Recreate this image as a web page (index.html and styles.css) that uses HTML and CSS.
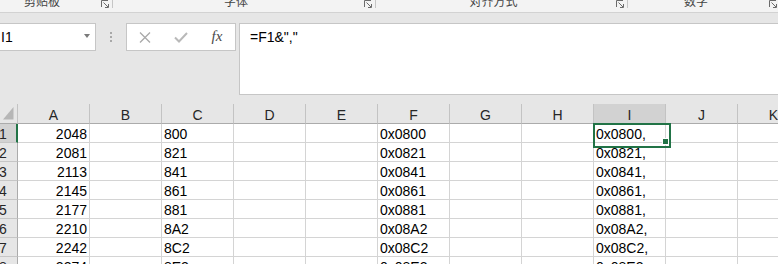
FILE: index.html
```html
<!DOCTYPE html>
<html lang="zh-CN">
<head>
    <meta charset="UTF-8">
    <title>Sheet1 - Excel</title>
    <link rel="stylesheet" href="styles.css">
</head>
<body>
    <div id="ribbon">
        <div class="group g1">
            <span class="group-label">剪贴板</span>
            <svg class="launcher" width="8" height="8" viewBox="0 0 8 8"><path d="M0.5 7V0.5H7M2.5 2.5L7 7M4 7.5H7.5V4" fill="none" stroke="#6a6a6a" stroke-width="1"/></svg>
        </div>
        <div class="group g2">
            <span class="group-label">字体</span>
            <svg class="launcher" width="8" height="8" viewBox="0 0 8 8"><path d="M0.5 7V0.5H7M2.5 2.5L7 7M4 7.5H7.5V4" fill="none" stroke="#6a6a6a" stroke-width="1"/></svg>
        </div>
        <div class="group g3">
            <span class="group-label">对齐方式</span>
            <svg class="launcher" width="8" height="8" viewBox="0 0 8 8"><path d="M0.5 7V0.5H7M2.5 2.5L7 7M4 7.5H7.5V4" fill="none" stroke="#6a6a6a" stroke-width="1"/></svg>
        </div>
        <div class="group g4">
            <span class="group-label">数字</span>
            <svg class="launcher" width="8" height="8" viewBox="0 0 8 8"><path d="M0.5 7V0.5H7M2.5 2.5L7 7M4 7.5H7.5V4" fill="none" stroke="#6a6a6a" stroke-width="1"/></svg>
        </div>
    </div>

    <div id="formula-row">
        <div class="name-box">
            <span>I1</span>
            <span class="drop"></span>
        </div>
        <div class="dots"><i></i><i></i><i></i></div>
        <div class="fx-buttons">
            <span class="fx-btn">
                <svg width="12" height="11" viewBox="0 0 12 11"><path d="M1 0.5L11 10.5M11 0.5L1 10.5" stroke="#a9a9a9" stroke-width="1.3"/></svg>
            </span>
            <span class="fx-btn">
                <svg width="14" height="11" viewBox="0 0 14 11"><path d="M1 5.5L5 9.5L13 1" fill="none" stroke="#b9b9b9" stroke-width="2"/></svg>
            </span>
            <span class="fx-btn fx">fx</span>
        </div>
        <div class="formula">=F1&amp;","</div>
    </div>

    <div id="sheet">
        <div class="hd corner"><svg width="17" height="19" viewBox="0 0 17 19"><polygon points="13.5,3 13.5,15.5 3,15.5" fill="#b6b6b6"/></svg></div>
        <div class="hd">A</div><div class="hd">B</div><div class="hd">C</div><div class="hd">D</div>
        <div class="hd">E</div><div class="hd">F</div><div class="hd">G</div><div class="hd">H</div>
        <div class="hd on">I</div><div class="hd">J</div><div class="hd">K</div>

        <div class="rh on">1</div><div class="c num">2048</div><div class="c"></div><div class="c">800</div><div class="c"></div><div class="c"></div><div class="c">0x0800</div><div class="c"></div><div class="c"></div><div class="c active">0x0800,</div><div class="c"></div><div class="c"></div>
        <div class="rh">2</div><div class="c num">2081</div><div class="c"></div><div class="c">821</div><div class="c"></div><div class="c"></div><div class="c">0x0821</div><div class="c"></div><div class="c"></div><div class="c">0x0821,</div><div class="c"></div><div class="c"></div>
        <div class="rh">3</div><div class="c num">2113</div><div class="c"></div><div class="c">841</div><div class="c"></div><div class="c"></div><div class="c">0x0841</div><div class="c"></div><div class="c"></div><div class="c">0x0841,</div><div class="c"></div><div class="c"></div>
        <div class="rh">4</div><div class="c num">2145</div><div class="c"></div><div class="c">861</div><div class="c"></div><div class="c"></div><div class="c">0x0861</div><div class="c"></div><div class="c"></div><div class="c">0x0861,</div><div class="c"></div><div class="c"></div>
        <div class="rh">5</div><div class="c num">2177</div><div class="c"></div><div class="c">881</div><div class="c"></div><div class="c"></div><div class="c">0x0881</div><div class="c"></div><div class="c"></div><div class="c">0x0881,</div><div class="c"></div><div class="c"></div>
        <div class="rh">6</div><div class="c num">2210</div><div class="c"></div><div class="c">8A2</div><div class="c"></div><div class="c"></div><div class="c">0x08A2</div><div class="c"></div><div class="c"></div><div class="c">0x08A2,</div><div class="c"></div><div class="c"></div>
        <div class="rh">7</div><div class="c num">2242</div><div class="c"></div><div class="c">8C2</div><div class="c"></div><div class="c"></div><div class="c">0x08C2</div><div class="c"></div><div class="c"></div><div class="c">0x08C2,</div><div class="c"></div><div class="c"></div>
        <div class="rh">8</div><div class="c num">2274</div><div class="c"></div><div class="c">8E2</div><div class="c"></div><div class="c"></div><div class="c">0x08E2</div><div class="c"></div><div class="c"></div><div class="c">0x08E2,</div><div class="c"></div><div class="c"></div>
    </div>
</body>
</html>
```

FILE: styles.css
```css
* {
    margin: 0;
    padding: 0;
    box-sizing: border-box;
}

body {
    width: 778px;
    height: 264px;
    overflow: hidden;
    background-color: #e6e6e6;
    font-family: "Liberation Sans", Arial, sans-serif;
    font-size: 14px;
    color: #000;
}

/* ribbon group captions (cut off at the top) */
#ribbon {
    display: flex;
    height: 13px;
    background-color: #f3f3f3;
    border-bottom: 1px solid #d2d2d2;
    overflow: hidden;
    white-space: nowrap;
}

.group {
    display: flex;
    align-items: flex-start;
    flex-shrink: 0;
    height: 12px;
}

.group-label {
    flex: 1;
    text-align: center;
    font-family: "Noto Sans CJK SC", sans-serif;
    font-size: 12px;
    line-height: 12px;
    margin-top: -5px;
    margin-right: 5px;
    color: #444;
}

.launcher {
    flex-shrink: 0;
    margin-right: 3px;
}

.group::after {
    content: "";
    width: 1px;
    height: 8px;
    background-color: #c6c6c6;
}

.g1 { width: 125px; margin-left: -12px; }
.g2 { width: 263px; }
.g3 { width: 252px; }
.g4 { width: 153px; }

/* name box + formula bar */
#formula-row {
    display: flex;
    align-items: flex-start;
    height: 91px;
    padding-top: 10px;
}

.name-box {
    display: flex;
    align-items: center;
    justify-content: space-between;
    width: 102px;
    height: 28px;
    margin-left: -6px;
    padding-left: 6px;
    padding-right: 5px;
    line-height: 26px;
    background-color: #fff;
    border: 1px solid #c6c6c6;
}

.drop {
    width: 0;
    height: 0;
    margin-bottom: 2px;
    border-left: 3.5px solid transparent;
    border-right: 3.5px solid transparent;
    border-top: 4px solid #7a7a7a;
}

.dots {
    display: flex;
    flex-direction: column;
    gap: 2px;
    margin: 9px 14px 0 14px;
}

.dots i {
    width: 2px;
    height: 2px;
    background-color: #a8a8a8;
}

.fx-buttons {
    display: flex;
    width: 110px;
    height: 28px;
    background-color: #fff;
    border: 1px solid #c6c6c6;
}

.fx-btn {
    display: flex;
    align-items: center;
    justify-content: center;
    width: 36px;
    height: 26px;
}

.fx {
    font-family: "Liberation Serif", serif;
    font-style: italic;
    font-size: 15px;
    color: #4a4a4a;
    padding-bottom: 1px;
}

.formula {
    flex: 1;
    height: 72px;
    margin-left: 3px;
    padding: 3px 0 0 10px;
    line-height: 20px;
    background-color: #fff;
    border: 1px solid #c6c6c6;
    border-right: none;
}

/* grid */
#sheet {
    display: grid;
    grid-template-columns: 18px repeat(11, 72px);
    grid-template-rows: 20px;
    grid-auto-rows: 19px;
}

.hd {
    text-align: center;
    padding-top: 4px;
    line-height: 15px;
    color: #262626;
    background-color: #e6e6e6;
    border-right: 1px solid #c3c3c3;
    border-bottom: 1px solid #ababab;
}

.hd.on {
    background-color: #d2d2d2;
}

.corner {
    padding: 0;
}

.corner svg {
    display: block;
}

.rh {
    line-height: 20px;
    text-indent: -1px;
    overflow: hidden;
    color: #262626;
    background-color: #e6e6e6;
    border-right: 1px solid #ababab;
    border-bottom: 1px solid #c6c6c6;
}

.rh.on {
    background-color: #d2d2d2;
    border-right: 2px solid #217346;
}

.c {
    padding: 0 2px;
    line-height: 20px;
    overflow: hidden;
    white-space: nowrap;
    background-color: #fff;
    border-right: 1px solid #d4d4d4;
    border-bottom: 1px solid #d4d4d4;
}

.c.num {
    text-align: right;
}

.c.active {
    position: relative;
    overflow: visible;
    z-index: 2;
}

.c.active::after {
    content: "";
    position: absolute;
    left: -1px;
    top: -1px;
    width: 74px;
    height: 21px;
    border: 2px solid #217346;
}

.c.active::before {
    content: "";
    position: absolute;
    left: 69px;
    top: 15px;
    width: 5px;
    height: 5px;
    background-color: #217346;
    box-shadow: 0 0 0 1px #fff;
    z-index: 1;
}
```
